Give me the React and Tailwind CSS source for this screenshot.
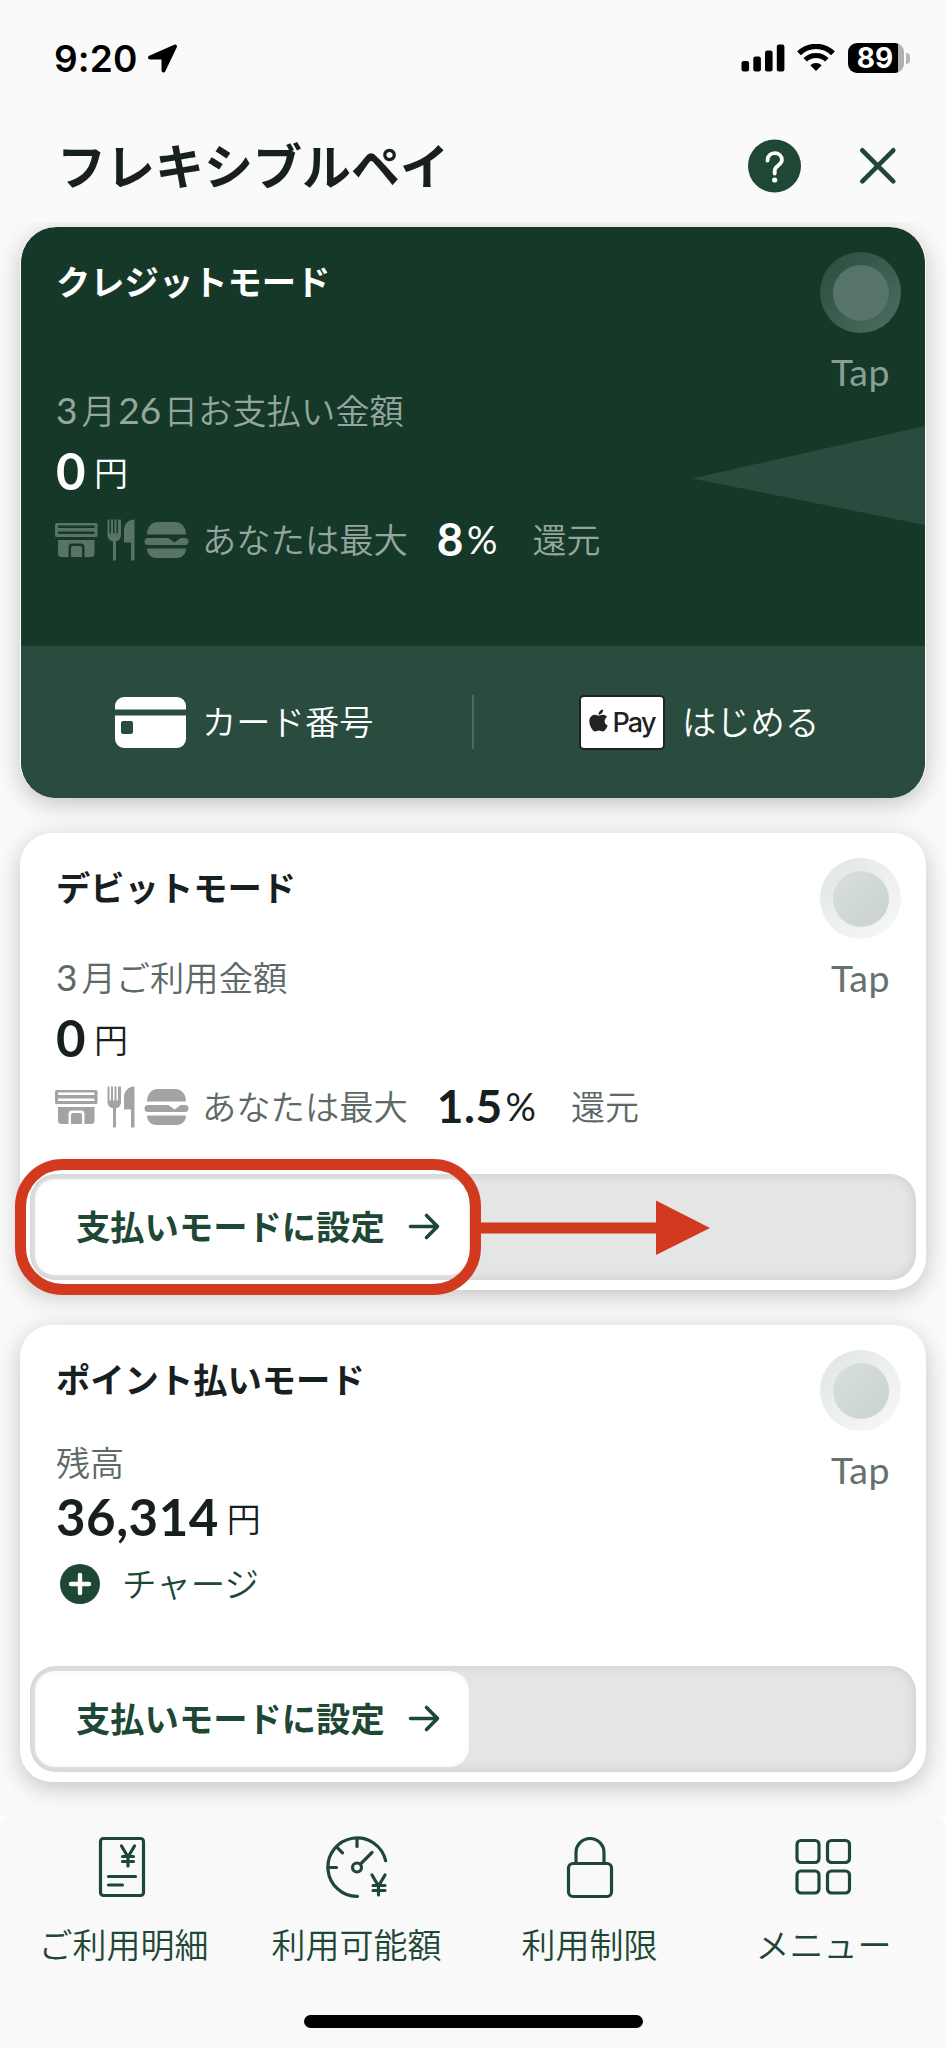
import { FaApple } from "react-icons/fa";

const navItems = [
  { label: "ご利用明細", icon: StatementIcon, box: "w-[240px] pl-[7px] rounded-tl-[10px] rounded-tr-[4px]" },
  { label: "利用可能額", icon: GaugeIcon, box: "w-[235px] pr-[2px] rounded-t-[4px]" },
  { label: "利用制限", icon: LockIcon, box: "w-[231px] pr-[2px] rounded-t-[4px]" },
  { label: "メニュー", icon: MenuIcon, box: "w-[240px] pr-[5px] rounded-tl-[4px] rounded-tr-[10px]" },
];

function StatementIcon() {
  return (
    <svg className="relative -left-[2px]" width="64" height="64" viewBox="0 0 64 64" fill="none" stroke="currentColor" strokeWidth="3.200" strokeLinecap="round" strokeLinejoin="round">
      <rect x="10.500" y="3.500" width="43" height="57" rx="3" />
      <path d="M31.500 11l6.500 11 6.500-11M38 22v9M32.500 21.500h11M32.500 26.500h11" />
      <path d="M18.500 41.500h27M18.500 50h14" />
    </svg>
  );
}

function GaugeIcon() {
  return (
    <svg width="64" height="64" viewBox="0 0 64 64" fill="none" stroke="currentColor" strokeWidth="3.200" strokeLinecap="round" strokeLinejoin="round">
      <path d="M32.500 61.300A29.200 29.200 0 1 1 60.600 25.700" />
      <path d="M32 4v7.500M3 32.500h8.500M11.500 11.800l6 6" />
      <circle cx="32" cy="32.500" r="4.500" />
      <path d="M35.500 29L47 17.500" />
      <path d="M47 40l6.500 11 6.500-11M53.500 51v9M48 50.500h12M48 55.500h12" />
    </svg>
  );
}

function LockIcon() {
  return (
    <svg width="64" height="64" viewBox="0 0 64 64" fill="none" stroke="currentColor" strokeWidth="3.200">
      <rect x="10.500" y="28.500" width="43" height="33" rx="4.500" />
      <path d="M18 28V17.500a14 14 0 0 1 28 0V28" />
    </svg>
  );
}

function MenuIcon() {
  return (
    <svg width="64" height="64" viewBox="0 0 64 64" fill="none" stroke="currentColor" strokeWidth="3.200">
      <rect x="5" y="5.500" width="22" height="22" rx="4" />
      <rect x="35.500" y="5.500" width="22" height="22" rx="4" />
      <rect x="5" y="36" width="22" height="22" rx="4" />
      <rect x="35.500" y="36" width="22" height="22" rx="4" />
    </svg>
  );
}

function StoreIcons({ dark }) {
  return (
    <svg className={`-ml-[1px] ${dark ? "text-[#587368]" : "text-[#a3a3a3]"}`} width="136" height="44" viewBox="0 0 136 44" fill="currentColor">
      {/* Shop */}
      <path fillRule="evenodd" d="M1.500 5h39.500a1.500 1.500 0 0 1 1.500 1.500v11a1.500 1.500 0 0 1-1.500 1.500H1.500A1.500 1.500 0 0 1 0 17.500v-11A1.500 1.500 0 0 1 1.500 5zM3 7.500v2.500h36.500V7.500zM3 13.500V16h36.500v-2.500z" />
      <path d="M3 22h36.500v13.500a3.500 3.500 0 0 1-3.500 3.500h-6.500V29a3.500 3.500 0 0 0-3.500-3.500h-9A3.500 3.500 0 0 0 13.500 29v10h-7A3.500 3.500 0 0 1 3 35.500z" />
      <path d="M16 39V30a2 2 0 0 1 2-2h7a2 2 0 0 1 2 2v9z" />
      {/* Fork and knife */}
      <path d="M52.500 1.500h2v14h1.500v-14h2v14h1.500v-14h2v14H63v-14h3V17a6.500 6.500 0 0 1-5 6.300V42.500h-3V23.300A6.500 6.500 0 0 1 52.500 17z" />
      <path d="M79.500 1.500v41h-3.500v-18h-7V12.500c0-6 3.500-10.500 10.500-11z" />
      {/* Burger */}
      <path d="M92 16.500c0-7 4-12.500 11-12.500h17c7 0 11 5.500 11 12.500z" />
      <rect x="89.500" y="20" width="44" height="7" rx="3.500" />
      <path d="M92 30.500h39c0 5.500-4 9.500-9 9.500h-21c-5 0-9-4-9-9.500z" />
      <path d="M112 19l7.500 5.500L127 19z" className={dark ? "fill-[#153829]" : "fill-white"} />
    </svg>
  );
}

function StatusBar() {
  return (
    <div className="flex h-[116px] items-center justify-between pl-[54px] pr-[36px] text-black">
      <div className="flex items-center gap-[9px]">
        <span className="font-['Inter'] text-[37px] font-semibold leading-none tracking-[0.2px]">9:20</span>
        <svg width="31" height="31" viewBox="0 0 31 31" fill="currentColor" stroke="currentColor" strokeWidth="4" strokeLinejoin="round">
          <path d="M28 3.500L16.500 27.500V14.500H3z" />
        </svg>
      </div>
      <div className="flex items-center">
        <svg width="44" height="28" viewBox="0 0 44 28" fill="currentColor">
          <rect x="0.500" y="17" width="7.600" height="10.500" rx="2.200" />
          <rect x="12.300" y="12.500" width="7.600" height="15" rx="2.200" />
          <rect x="24" y="6.500" width="7.600" height="21" rx="2.200" />
          <rect x="35.800" y="0.500" width="7.600" height="27" rx="2.200" />
        </svg>
        <svg className="ml-[12px]" width="38" height="28" viewBox="0 0 38 28" fill="none" stroke="currentColor">
          <path d="M2 9.400a24.200 24.200 0 0 1 34 0" strokeWidth="5.400" />
          <path d="M8.200 15.800a15.400 15.400 0 0 1 21.600 0" strokeWidth="5" />
          <path d="M13.300 21.300a8 8 0 0 1 11.400 0L19 27z" fill="currentColor" stroke="none" />
        </svg>
        <div className="ml-[13px] flex h-[30px] w-[56px] items-center justify-center rounded-[9px] bg-[linear-gradient(to_right,#000_50px,#b0b0b0_50px)] pr-[2px] font-['Inter'] text-[28px] font-bold leading-none text-white">
          89
        </div>
        <div className="ml-[2px] h-[11px] w-[4px] rounded-r-full bg-[#b5b5b5]" />
      </div>
    </div>
  );
}

function Header() {
  return (
    <header className="flex h-[106px] items-start pl-[57px] pr-[48px]">
      <h1 className="mt-[13px] h-[70px] grow text-[49px] font-bold leading-[70px] text-[#18201f]">フレキシブルペイ</h1>
      <svg className="mt-[23px]" width="54" height="54" viewBox="0 0 54 54" fill="none">
        <circle cx="26.500" cy="27" r="26.500" fill="#1e4735" />
        <path d="M19.500 21.500c0-4.500 3-7.300 7.200-7.300s7.200 2.800 7.200 6.800c0 5.300-7.200 5.500-7.200 10.500v3" stroke="#fff" strokeWidth="3.800" strokeLinecap="round" />
        <circle cx="26.700" cy="41" r="2.600" fill="#fff" />
      </svg>
      <svg className="ml-[56px] mt-[30px]" width="40" height="40" viewBox="0 0 40 40" stroke="#1e4735" strokeWidth="4.600" strokeLinecap="round">
        <path d="M4.300 4.300l31 31M35.300 4.300l-31 31" />
      </svg>
    </header>
  );
}

function TapButton({ dark }) {
  return (
    <div className={`absolute top-[25px] flex w-[81px] flex-col items-center ${dark ? "right-[24px]" : "right-[25px]"}`}>
      <div
        className={`flex h-[81px] w-[81px] items-center justify-center rounded-full bg-linear-to-br ${
          dark ? "from-[#2a4c3e] to-[#4b6f61]" : "from-[#e0e6e4] to-[#f8f9f9]"
        }`}
      >
        <div className={`h-[56px] w-[56px] rounded-full bg-linear-to-br ${dark ? "from-[#567468] to-[#567468]" : "from-[#d9e0dd] to-[#c8d2ce]"}`} />
      </div>
      <span className={`mt-[15px] font-['Lato'] text-[37.500px] font-normal leading-[48px] tracking-[0.500px] ${dark ? "text-[#8a9e95]" : "text-[#65716d]"}`}>Tap</span>
    </div>
  );
}

function CardTitle({ children }) {
  return <h2 className="h-[40px] text-[34.300px] font-bold leading-[40px]">{children}</h2>;
}

function Amount({ value, className }) {
  return (
    <p className={`flex h-[50px] items-baseline leading-[50px] ${className}`}>
      <span className="font-['Lato'] text-[51px] font-bold tracking-[0.500px]">{value}</span>
      <span className="relative top-[-4px] ml-[8px] text-[34px] font-[350]">円</span>
    </p>
  );
}

function Reward({ rate, dark }) {
  return (
    <div className="mt-[19px] flex h-[50px] items-center">
      <StoreIcons dark={dark} />
      <p className="ml-[11px] flex items-baseline leading-[50px]">
        <span className={`relative top-[-3px] text-[34.300px] font-[350] ${dark ? "text-[#94a69e]" : "text-[#5d6966]"}`}>あなたは最大</span>
        <span className="ml-[29px] font-['Lato'] text-[46px] font-bold tracking-[0.500px]">{rate}</span>
        <span className="relative top-[-2px] ml-[3px] font-['Lato'] text-[38px] font-normal">%</span>
        <span className={`relative top-[-3px] ml-[35px] text-[34px] font-[350] ${dark ? "text-[#94a69e]" : "text-[#5d6966]"}`}>還元</span>
      </p>
    </div>
  );
}

function ModeSlider() {
  return (
    <div className="mx-[10px] mb-[10px] mt-auto h-[106px] rounded-[26px] bg-[#e4e6e5] p-[5px] shadow-[inset_0_0_12px_rgba(0,0,0,0.12)]">
      <button className="flex h-[96px] w-[434px] items-center rounded-[20px] bg-white pl-[41px] text-[#1e4735] shadow-[inset_0_0_6px_rgba(0,0,0,0.04)]">
        <span className="-mt-[4px] text-[34.300px] font-bold leading-[48px]">支払いモードに設定</span>
        <svg className="ml-[22px]" width="34" height="30" viewBox="0 0 34 30" fill="none" stroke="currentColor" strokeWidth="3.600" strokeLinecap="round" strokeLinejoin="round">
          <path d="M3.500 14.500h27M19.500 3.500l11 11-11 11" />
        </svg>
      </button>
    </div>
  );
}

function CreditCardPanel() {
  return (
    <section className="relative flex h-[571px] shrink-0 flex-col overflow-hidden rounded-[36px] border-x border-white bg-[#153829] text-white">
      <svg className="absolute right-0 top-[199px]" width="233" height="99" viewBox="0 0 233 99">
        <path d="M0 52.500L233 0v99z" fill="#294c3e" />
      </svg>
      <TapButton dark />
      <div className="h-[419px] pl-[35px] pt-[33px]">
        <CardTitle>クレジットモード</CardTitle>
        <p className="mt-[90px] h-[40px] font-['Lato','Noto_Sans_CJK_JP',sans-serif] text-[34.300px] font-[350] leading-[40px] text-[#94a69e]">
          <span className="mr-[4px] text-[37px] font-normal">3</span>月<span className="mx-[2.500px] text-[37px] font-normal">26</span>日お支払い金額
        </p>
        <Amount value="0" className="mt-[16px]" />
        <Reward rate="8" dark />
      </div>
      <div className="flex grow items-center bg-[#294c3e] text-[34.300px] font-[350]">
        <div className="flex w-[451px] items-center pl-[94px]">
          <svg width="71" height="51" viewBox="0 0 71 51" fill="#fff">
            <path d="M9 0h53a9 9 0 0 1 9 9v3.500H0V9a9 9 0 0 1 9-9z" />
            <path fillRule="evenodd" d="M0 18.500h71V42a9 9 0 0 1-9 9H9a9 9 0 0 1-9-9zM8 24a2 2 0 0 0-2 2v9a2 2 0 0 0 2 2h8a2 2 0 0 0 2-2v-9a2 2 0 0 0-2-2z" />
          </svg>
          <span className="-mt-[4px] ml-[16px] leading-[48px]">カード番号</span>
        </div>
        <div className="h-[54px] w-[2px] bg-[#4b6a5e]" />
        <div className="flex items-center pl-[105px]">
          <div className="flex h-[55px] w-[86px] items-center justify-center rounded-[5px] border-2 border-[#222] bg-white pr-[3px] text-[#222]">
            <FaApple className="-mt-[3px] text-[25px]" />
            <span className="ml-[1px] font-['Inter'] text-[27px] font-medium leading-none tracking-[-1.800px]">Pay</span>
          </div>
          <span className="-mt-[4px] ml-[17px] leading-[48px]">はじめる</span>
        </div>
      </div>
    </section>
  );
}

function DebitPanel() {
  return (
    <section className="relative mt-[35px] flex h-[457px] shrink-0 flex-col rounded-[32px] bg-white text-[#18201f] shadow-[0_6px_24px_rgba(0,0,0,0.22)]">
      <TapButton />
      <div className="pl-[36px] pt-[33px]">
        <CardTitle>デビットモード</CardTitle>
        <p className="mt-[51px] h-[40px] font-['Lato','Noto_Sans_CJK_JP',sans-serif] text-[34.300px] font-[350] leading-[40px] text-[#5d6966]">
          <span className="mr-[4px] text-[37px] font-normal">3</span>月ご利用金額
        </p>
        <Amount value="0" className="mt-[16px]" />
        <Reward rate="1.5" />
      </div>
      <ModeSlider />
      {/* Swipe hint drawn over the slider */}
      <svg className="absolute left-[-5px] top-[326px]" width="696" height="136" viewBox="0 0 696 136">
        <rect x="5.500" y="5.500" width="455" height="125" rx="42" fill="none" stroke="#d23a20" strokeWidth="11" />
        <path d="M462 63.500h179V41.500L695 69l-54 27V74.500H462z" fill="#d23a20" />
      </svg>
    </section>
  );
}

function PointPanel() {
  return (
    <section className="relative mt-[35px] flex h-[457px] shrink-0 flex-col rounded-[32px] bg-white text-[#18201f] shadow-[0_6px_24px_rgba(0,0,0,0.22)]">
      <TapButton />
      <div className="pl-[36px] pt-[33px]">
        <CardTitle>ポイント払いモード</CardTitle>
        <p className="mt-[44px] h-[40px] text-[34px] font-[350] leading-[40px] text-[#5d6966]">残高</p>
        <Amount value="36,314" className="mt-[10px]" />
        <div className="mt-[22px] flex h-[40px] items-center pl-[4px] text-[#1e4735]">
          <svg width="40" height="40" viewBox="0 0 40 40">
            <circle cx="20" cy="20" r="20" fill="currentColor" />
            <path d="M11 20h18M20 11v18" stroke="#fff" strokeWidth="4.400" strokeLinecap="round" />
          </svg>
          <span className="-mt-[4px] ml-[22px] text-[34.500px] font-[350] leading-[40px]">チャージ</span>
        </div>
      </div>
      <ModeSlider />
    </section>
  );
}

function BottomNav() {
  return (
    <nav className="h-[231px] bg-[#f9f9f9]">
      <div className="flex h-[180px] bg-[linear-gradient(#fff_20px,#f9f9f9_20px)]">
        {navItems.map((item) => {
          const Icon = item.icon;
          return (
            <button key={item.label} className={`flex flex-col items-center bg-[#f9f9f9] pt-[18px] text-[#1e4735] ${item.box}`}>
              <Icon />
              <span className="mt-[21px] text-[34px] font-[350] leading-[48px]">{item.label}</span>
            </button>
          );
        })}
      </div>
      <div className="mx-auto mt-[18px] h-[13px] w-[339px] rounded-full bg-black" />
    </nav>
  );
}

function App() {
  return (
    <div className="flex h-[2048px] w-[946px] flex-col overflow-hidden bg-[#fafafa] font-['Noto_Sans_CJK_JP',sans-serif]">
      <StatusBar />
      <Header />
      <main className="flex h-[1595px] flex-col overflow-hidden px-[20px] pt-[5px]">
        <div className="shrink-0 rounded-[36px] shadow-[0_6px_24px_rgba(0,0,0,0.22)]">
          <CreditCardPanel />
        </div>
        <DebitPanel />
        <PointPanel />
      </main>
      <BottomNav />
    </div>
  );
}

export default App;
